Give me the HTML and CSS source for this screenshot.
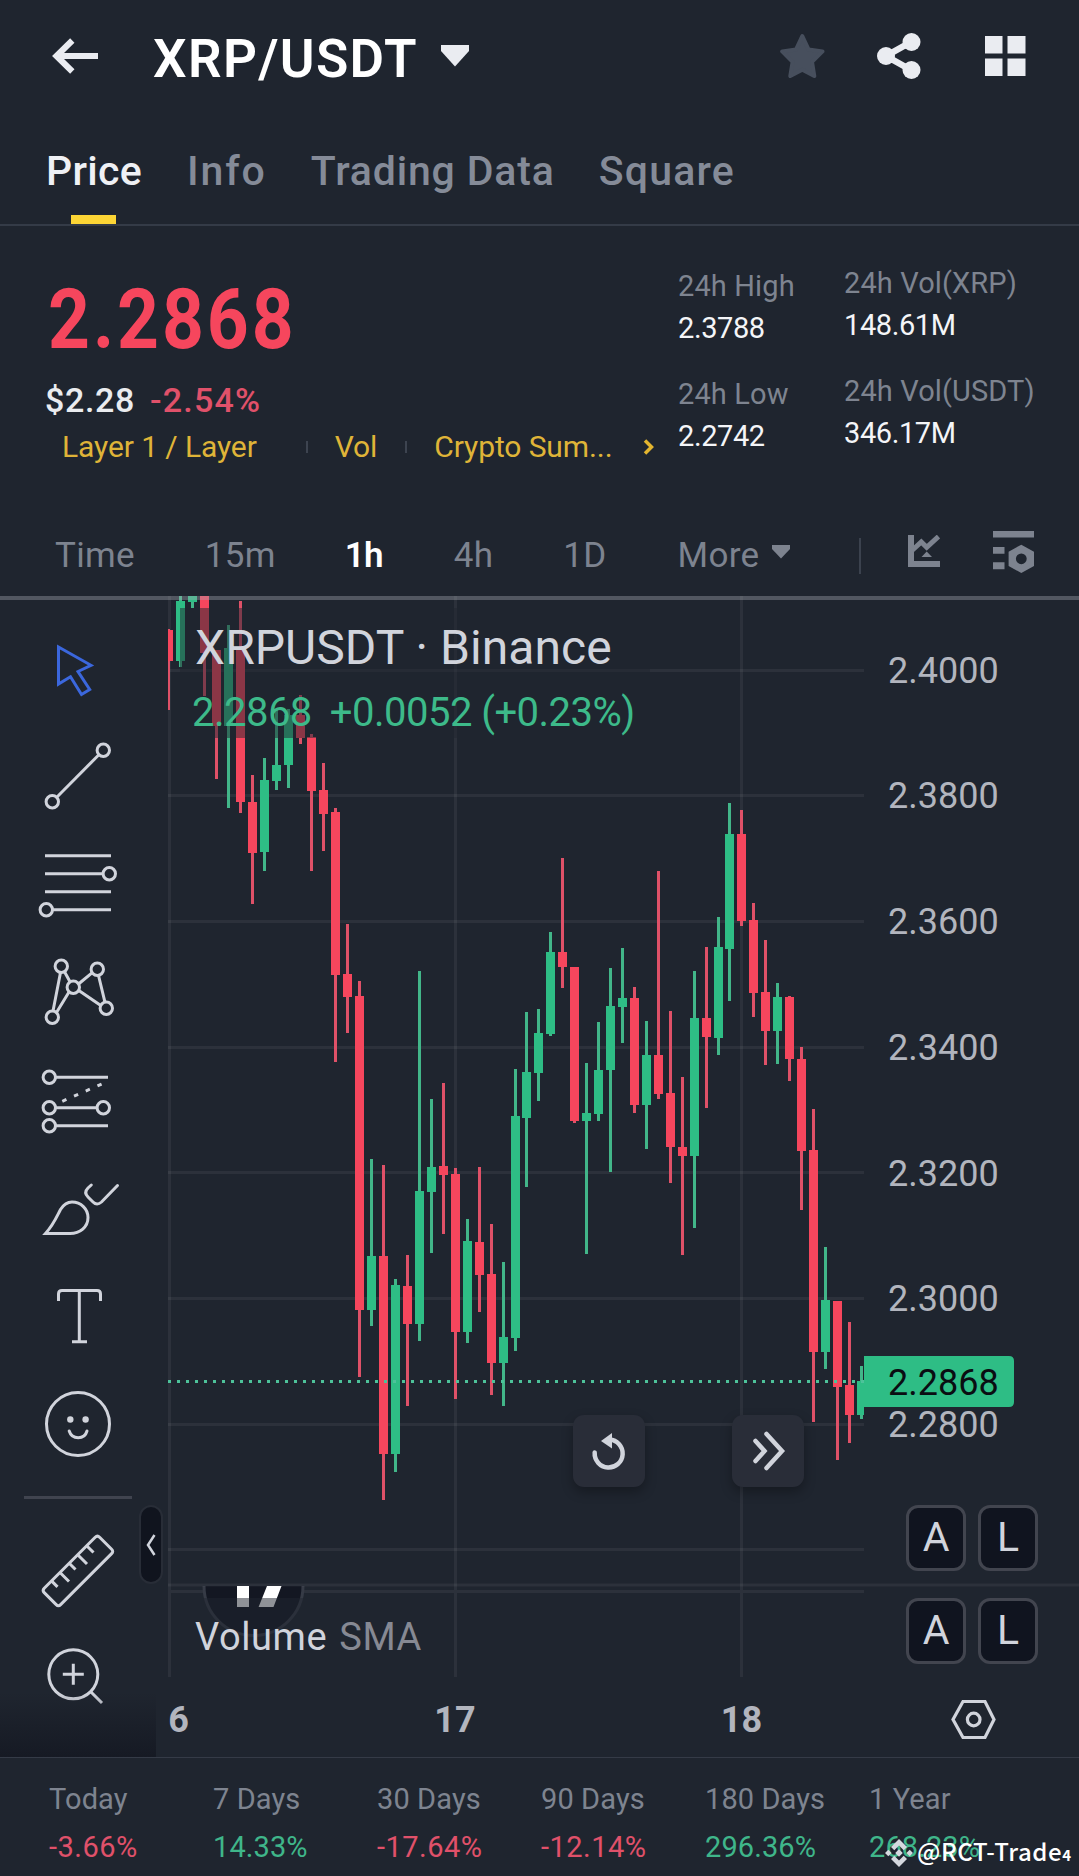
FILE: index.html
```
<!DOCTYPE html>
<html lang="en">
<head>
    <meta charset="UTF-8">
    <meta name="viewport" content="width=device-width, initial-scale=1.0">
    <title>XRP/USDT</title>
    <link rel="stylesheet" href="styles.css">
</head>
<body>
    <header class="header">
        <svg class="back" width="46" height="36" viewBox="0 0 46 36"><path d="M20.3 2.5L4.5 18L20.3 33.5M5 18H46"/></svg>
        <h1>XRP/USDT</h1>
        <svg class="caret" width="28" height="22" viewBox="0 0 28 22"><path d="M0 0H28V6L14 21.5L0 6Z"/></svg>
        <svg class="star" width="45" height="46" viewBox="0 0 45 46"><path d="M22.3 3L28.6 16.6L42.5 18.4L32 28.8L34.3 43L22.3 36.8L10.3 43L12.6 28.8L2.2 18.4L16 16.6Z"/></svg>
        <svg class="share" width="44" height="46" viewBox="0 0 44 46">
            <path d="M34 9L9 23L34 37"/>
            <circle cx="9" cy="23" r="9"/><circle cx="34.5" cy="9" r="9"/><circle cx="34.5" cy="37" r="9"/>
        </svg>
        <svg class="grid-icon" width="41" height="40" viewBox="0 0 41 40"><path d="M0 0H17.5V17.5H0ZM22.5 0H40.5V17.5H22.5ZM0 22.5H17.5V40H0ZM22.5 22.5H40.5V40H22.5Z"/></svg>
    </header>

    <nav class="tabs">
        <span class="tab active">Price</span>
        <span class="tab info">Info</span>
        <span class="tab trading">Trading Data</span>
        <span class="tab square">Square</span>
    </nav>

    <section class="quote">
        <div class="main-price">
            <div class="price">2.2868</div>
            <div class="change"><span class="usd">$2.28</span><span class="down">-2.54%</span></div>
            <div class="tags">
                <span>Layer 1 / Layer</span>
                <i class="sep sep-first"></i>
                <span>Vol</span>
                <i class="sep"></i>
                <span>Crypto Sum...</span>
                <svg width="11" height="16" viewBox="0 0 11 16"><path d="M2 1.5L8.5 8L2 14.5"/></svg>
            </div>
        </div>
        <div class="stats">
            <label>24h High</label>
            <b>2.3788</b>
            <label>24h Low</label>
            <b>2.2742</b>
        </div>
        <div class="stats volume">
            <label>24h Vol(XRP)</label>
            <b>148.61M</b>
            <label>24h Vol(USDT)</label>
            <b>346.17M</b>
        </div>
    </section>

    <div class="intervals">
        <span>Time</span>
        <span>15m</span>
        <span class="active">1h</span>
        <span>4h</span>
        <span>1D</span>
        <span class="more">More <svg width="18" height="14" viewBox="0 0 18 14"><path d="M0 0H18V4L9 13.5L0 4Z"/></svg></span>
        <i class="bar"></i>
        <svg class="kline" width="32" height="32" viewBox="0 0 32 32">
            <path class="fill" d="M0 0H6V26H32V32H0ZM18.7 16.5L24 22H13.5Z"/>
            <path class="stroke" d="M4 15.5L13.3 7L18.7 12.3L30.5 1.5"/>
        </svg>
        <svg class="settings" width="41" height="42" viewBox="0 0 41 42">
            <path class="fill" d="M0 0H41V6.5H0ZM0 16H11.5V22.7H0ZM0 31.3H11.5V38.3H0Z"/>
            <path class="fill" fill-rule="evenodd" d="M28.3 13.7L41 20.7V35L28.3 42L15.6 35V20.7ZM28.3 22.4A5.4 5.4 0 1 0 28.3 33.2A5.4 5.4 0 1 0 28.3 22.4Z"/>
        </svg>
    </div>

    <main class="chart">
        <aside class="toolbar">
            <svg class="cursor" viewBox="0 0 168 108"><path d="M58.5 33L91 51.3L78 57.5L89.7 75.5L81.5 80.5L70.5 62.7L58.5 70Z"/></svg>
            <svg viewBox="0 0 168 108"><path d="M57 75L98.6 33"/><circle cx="52.3" cy="79.7" r="6.2"/><circle cx="103.3" cy="28.3" r="6.2"/></svg>
            <svg viewBox="0 0 168 108"><path d="M45 25.7H111M45 43.7H103M45 61.7H111M52.5 79.7H111"/><circle cx="109.3" cy="43.7" r="6.2"/><circle cx="46.3" cy="79.7" r="6.2"/></svg>
            <svg viewBox="0 0 168 108">
                <path d="M60.5 34.5L53 73M64.5 33.7L70 43.8M78.5 46L92 34.8M98.5 37.5L105 64.3M78.8 52.4L100.8 67.4M69 54L56.5 74.5"/>
                <circle cx="61.3" cy="28.3" r="6.2"/><circle cx="97.3" cy="31.3" r="6.2"/><circle cx="73.3" cy="49.3" r="6.2"/><circle cx="106.3" cy="70.3" r="6.2"/><circle cx="52.3" cy="79.3" r="6.2"/>
            </svg>
            <svg viewBox="0 0 168 108">
                <path d="M56 31.3H108M56 61.7H97M56 79.7H108"/><path stroke-dasharray="4.5 8.3" d="M62.3 55.3L104 37"/>
                <circle cx="49.3" cy="31.3" r="6.2"/><circle cx="49.3" cy="61.7" r="6.2"/><circle cx="103.3" cy="61.7" r="6.2"/><circle cx="49.3" cy="79.7" r="6.2"/>
            </svg>
            <svg viewBox="0 0 168 108"><path d="M45.5 79.5C54 70 56.5 63 60.5 55.5C64 50 67 48 72 48C81 48 88 55 88 63.5C88 73 80 79.5 70 79.5Z"/><path stroke-linecap="round" d="M91.3 31L88 34Q83.5 38.5 88 43L93 48Q97 52 101.5 48L117.5 31.5"/></svg>
            <svg viewBox="0 0 168 108"><path d="M58.5 39V32Q58.5 28.5 62 28.5H97Q100.5 28.5 100.5 32V39M79.3 28.5V79.7M72 79.7H87"/></svg>
            <svg viewBox="0 0 168 108"><circle cx="78" cy="54" r="31.5"/><circle class="dot" cx="70.3" cy="49.5" r="3.2"/><circle class="dot" cx="85.6" cy="49.5" r="3.2"/><path stroke-linecap="round" d="M69.2 61C72 70 84.5 70 87 61"/></svg>
            <hr>
            <svg viewBox="0 0 168 108">
                <path stroke-linejoin="round" d="M95.2 20.2Q97.4 18 99.6 20.2L111.6 32.2Q113.8 34.4 111.6 36.6L60.6 87.6Q58.4 89.8 56.2 87.6L44.2 75.6Q42 73.4 44.2 71.2Z"/>
                <path d="M51.5 63.9L57.5 69.9M60 55.5L69 64.5M69.2 46.2L75.5 52.5M77.7 37.7L87 47M86.7 28.7L93.5 35.5"/>
            </svg>
            <svg viewBox="0 0 168 108"><circle cx="73.3" cy="49.3" r="24.5"/><path d="M90.5 66.5L102 78M73.3 38.8V59.8M62.8 49.3H83.8"/></svg>
            <div class="fade"></div>
            <button class="collapse"><svg width="10" height="22" viewBox="0 0 10 22"><path d="M8.5 1L2 11L8.5 21"/></svg></button>
        </aside>
        <div class="plot">
            <svg id="canvas" width="911" height="1161" viewBox="168 596 911 1161"></svg>
            <div class="legend">
                <div class="symbol">XRPUSDT · Binance</div>
                <div class="values"><span>2.2868</span><span>+0.0052 (+0.23%)</span></div>
            </div>
            <div class="legend legend-volume"><span>Volume</span><span class="sma">SMA</span></div>
            <button class="float reset"><svg width="72" height="72" viewBox="0 0 72 72"><path class="line" d="M21.7 37.5A14 14 0 1 0 36.5 24.5"/><path class="tip" d="M28 26L39 18V33.5Z"/></svg></button>
            <button class="float next"><svg width="72" height="72" viewBox="0 0 72 72"><path class="line" d="M23.5 26L32.5 36L23.5 46M34.5 19L50 36L34.5 53"/></svg></button>
            <div class="modes"><button>A</button><button>L</button></div>
            <div class="modes modes-volume"><button>A</button><button>L</button></div>
        </div>
    </main>

    <footer class="periods">
        <div><label>Today</label><span class="down">-3.66%</span></div>
        <div><label>7 Days</label><span class="up">14.33%</span></div>
        <div><label>30 Days</label><span class="down">-17.64%</span></div>
        <div><label>90 Days</label><span class="down">-12.14%</span></div>
        <div><label>180 Days</label><span class="up">296.36%</span></div>
        <div><label>1 Year</label><span class="up">268.23%</span></div>
        <div class="author">
            <svg width="28" height="28" viewBox="0 0 28 28"><path d="M14 0L22 8L18.7 11.2L14 6.6L9.3 11.2L6 8ZM3.3 10.7L6.6 14L3.3 17.3L0 14ZM24.7 10.7L28 14L24.7 17.3L21.4 14ZM14 10.2L17.8 14L14 17.8L10.2 14ZM14 28L22 20L18.7 16.8L14 21.4L9.3 16.8L6 20Z"/></svg>
            <span>@RCT-Trade<small>4</small></span>
        </div>
    </footer>

    <script src="script.js"></script>
</body>
</html>
```

FILE: styles.css
```
*{
    margin: 0;
    padding: 0;
    box-sizing: border-box;
}
body{
    width: 1079px;
    height: 1876px;
    overflow: hidden;
    background-color: #1f252f;
    color: #eaecef;
    font-family: Roboto, sans-serif;
}
svg{
    display: block;
    flex: none;
}
button{
    border: 0;
    font-family: inherit;
}
.down{
    color: #e0516a;
}
.up{
    color: #3fb68a;
}

/* header */
.header{
    display: flex;
    align-items: center;
    height: 112px;
    padding: 0 53px 0 52px;
    fill: #eaecf1;
}
.back path{
    fill: none;
    stroke: #eaecf1;
    stroke-width: 6.2;
}
.header h1{
    margin: 5px 0 0 55px;
    font-size: 53px;
    line-height: 60px;
    font-weight: 600;
    letter-spacing: 1.34px;
    color: #fff;
}
.caret{
    margin-left: 23px;
}
.star{
    margin-left: auto;
    fill: #474f5d;
    stroke: #474f5d;
    stroke-width: 4;
    stroke-linejoin: round;
}
.share{
    margin-left: 52px;
}
.share path{
    fill: none;
    stroke: #eaecf1;
    stroke-width: 6.5;
}
.grid-icon{
    margin-left: 64px;
}

/* tabs */
.tabs{
    display: flex;
    gap: 44px;
    height: 114px;
    padding: 39px 0 0 46px;
    border-bottom: 2px solid #343b47;
    font-size: 41px;
    line-height: 40px;
    font-weight: 500;
    color: #858b98;
}
.tab{
    position: relative;
}
.tab.active{
    color: #eff1f5;
    letter-spacing: 0.3px;
}
.tab.active::after{
    content: "";
    position: absolute;
    left: 25px;
    top: 64px;
    width: 45px;
    height: 9px;
    background-color: #fcd535;
}
.info{
    margin-left: 1px;
    letter-spacing: 1.9px;
}
.trading{
    letter-spacing: 0.84px;
}
.square{
    letter-spacing: 1.2px;
}

/* quote */
.quote{
    display: grid;
    grid-template-columns: 678px 166px 1fr;
    height: 288px;
}
.main-price{
    padding-top: 52px;
}
.price{
    padding-left: 48px;
    font-size: 84px;
    line-height: 84px;
    font-weight: 700;
    letter-spacing: 3.4px;
    color: #f6465d;
    transform: scaleX(0.87);
    transform-origin: 48px 50%;
}
.change{
    display: flex;
    gap: 15px;
    margin-top: 18px;
    padding-left: 45px;
    font-size: 34px;
    line-height: 40px;
    font-weight: 500;
    letter-spacing: 1.2px;
}
.usd{
    letter-spacing: 0.65px;
}
.tags{
    display: flex;
    align-items: center;
    margin-top: 9px;
    padding-left: 62px;
    font-size: 30px;
    line-height: 36px;
    color: #dfb438;
}
.tags span{
    letter-spacing: -0.1px;
}
.tags svg{
    margin-left: 31px;
    fill: none;
    stroke: #e3b52f;
    stroke-width: 3.5;
}
.sep{
    width: 2px;
    height: 12px;
    margin: 0 27px 0 28px;
    background-color: #3d4450;
}
.sep-first{
    margin-left: 49px;
}
.stats{
    padding-top: 42px;
    font-size: 29px;
    line-height: 36px;
}
.stats.volume{
    padding-top: 39px;
}
.stats label{
    display: block;
    color: #7e8490;
    letter-spacing: 0.12px;
    white-space: nowrap;
}
.stats b{
    display: block;
    margin: 6px 0 30px;
    font-weight: 400;
    letter-spacing: -0.4px;
    color: #f4f5f8;
}

/* intervals */
.intervals{
    display: flex;
    align-items: center;
    gap: 70px;
    height: 83px;
    margin-bottom: -1px;
    padding-left: 55px;
    font-size: 35px;
    line-height: 42px;
    letter-spacing: 0.3px;
    color: #7d838f;
    fill: #7d838f;
}
.intervals .active{
    margin: 0 1px 0 -1px;
    color: #fff;
    font-weight: 600;
    letter-spacing: -0.8px;
}
.more{
    display: flex;
    gap: 13px;
    margin-left: 1px;
}
.more svg{
    margin-top: 10px;
}
.bar{
    width: 2px;
    height: 36px;
    margin: 0 -23px 0 -1px;
    background-color: #3b424e;
}
.kline{
    margin-top: -9px;
}
.kline .stroke{
    fill: none;
    stroke: #7d838f;
    stroke-width: 5;
}
.settings{
    margin: -7px 0 0 -17px;
}

/* chart */
.chart{
    position: relative;
    display: grid;
    grid-template-columns: 168px 911px;
    height: 1161px;
}
.chart::before{
    content: "";
    position: absolute;
    z-index: 2;
    left: 0;
    right: 0;
    top: 0;
    height: 4px;
    background-color: rgba(165, 170, 180, 0.38);
}
.toolbar{
    position: relative;
    height: 1161px;
    padding-top: 18px;
    overflow: hidden;
}
.toolbar > svg{
    width: 168px;
    height: 108px;
    fill: none;
    stroke: #d1d4dc;
    stroke-width: 3;
}
.toolbar > .cursor{
    stroke: #3b67dd;
}
.toolbar .dot{
    fill: #d1d4dc;
    stroke: none;
}
.toolbar hr{
    width: 108px;
    height: 3px;
    margin: 18px 0 18px 24px;
    border: 0;
    background-color: #40444f;
}
.fade{
    position: absolute;
    left: 0;
    bottom: 0;
    width: 156px;
    height: 64px;
    background: linear-gradient(rgba(22, 26, 36, 0), #161a24);
}
.collapse{
    position: absolute;
    left: 139px;
    top: 909px;
    width: 24px;
    height: 79px;
    padding-left: 5px;
    border: 2px solid #282d37;
    border-radius: 12px;
    background-color: #10141e;
}
.collapse path{
    fill: none;
    stroke: #d1d4dc;
    stroke-width: 2.5;
}
.plot{
    position: relative;
}
.legend{
    position: absolute;
    left: 12px;
    top: 12px;
    width: 470px;
    height: 130px;
    padding: 12px 0 0 15px;
    background-color: rgba(31, 37, 47, 0.5);
    color: #d1d4dc;
}
.symbol{
    font-size: 48px;
    line-height: 56px;
    letter-spacing: 0.05px;
}
.values{
    display: flex;
    gap: 18px;
    margin: 13px 0 0 -3px;
    font-size: 40px;
    line-height: 48px;
    letter-spacing: -0.52px;
    color: #3dba8a;
}
.legend-volume{
    display: flex;
    gap: 12px;
    top: 1002px;
    width: 250px;
    height: 67px;
    padding: 16px 0 0 15px;
    font-size: 38px;
    line-height: 46px;
    letter-spacing: 0.6px;
}
.sma{
    color: #868993;
}
.float{
    position: absolute;
    top: 819px;
    width: 72px;
    height: 72px;
    border-radius: 11px;
    background-color: #292d38;
    box-shadow: 0 5px 12px rgba(0, 0, 0, 0.3);
}
.reset{
    left: 405px;
}
.next{
    left: 564px;
}
.float .line{
    fill: none;
    stroke: #d1d4dc;
    stroke-width: 4.5;
    stroke-linecap: round;
}
.float .tip{
    fill: #d1d4dc;
}
.modes{
    position: absolute;
    left: 738px;
    top: 909px;
    display: flex;
    gap: 12px;
}
.modes-volume{
    top: 1002px;
}
.modes button{
    width: 60px;
    height: 66px;
    padding-bottom: 3px;
    border: 3px solid #42454f;
    border-radius: 12px;
    background-color: #10141f;
    color: #d1d4dc;
    font-size: 41px;
    line-height: 56px;
}

/* chart drawing */
.grid-line{
    stroke: rgba(255, 255, 255, 0.06);
    stroke-width: 3;
}
.up-body{
    fill: #2ebd85;
}
.down-body{
    fill: #f6465d;
}
.up-wick{
    fill: #42b689;
}
.down-wick{
    fill: #df5168;
}
.last-line{
    stroke: #4dc29a;
    stroke-width: 3;
    stroke-dasharray: 3 6;
}
.axis{
    font-size: 36px;
    fill: #b2b5be;
}
.axis.last{
    fill: #0a0d12;
}
.axis.day{
    font-weight: 700;
    text-anchor: middle;
}
.logo-circle{
    fill: #131722;
    stroke: #363b46;
    stroke-width: 3;
}
.logo-mark{
    fill: #fff;
}
.gear{
    fill: none;
    stroke: #d1d4dc;
    stroke-width: 3.2;
}

/* periods */
.periods{
    position: relative;
    display: grid;
    grid-template-columns: repeat(6, 164px);
    height: 119px;
    padding: 23px 0 0 49px;
    border-top: 1px solid #353b47;
    font-size: 29px;
    line-height: 36px;
    letter-spacing: 0.1px;
}
.periods label{
    display: block;
    margin-bottom: 12px;
    color: #7e8490;
}
.periods .down{
    letter-spacing: 0.5px;
}
.author{
    position: absolute;
    left: 885px;
    top: 77px;
    display: flex;
    align-items: center;
    gap: 4px;
    font: 500 24px/32px "Noto Sans CJK SC", sans-serif;
    letter-spacing: 0.6px;
    color: #fff;
    fill: #d5d8de;
}
.author small{
    font-size: 15px;
    font-weight: 700;
}
```

FILE: script.js
```
const canvas = document.getElementById('canvas');

// side, high, body top, body bottom, low
const candles = [
    ['down', 629, 630, 661, 710], ['up', 590, 601, 661, 667], ['up', 580, 590, 602, 608], ['down', 580, 590, 653, 696],
    ['down', 650, 650, 726, 779], ['up', 625, 648, 726, 808], ['down', 601, 648, 802, 813], ['down', 775, 802, 853, 904],
    ['up', 758, 780, 852, 871], ['up', 710, 765, 781, 790], ['up', 709, 715, 765, 788], ['down', 695, 715, 738, 744],
    ['down', 734, 737, 791, 871], ['down', 763, 790, 814, 851], ['down', 808, 812, 975, 1062], ['down', 924, 974, 997, 1033],
    ['down', 981, 996, 1310, 1377], ['up', 1159, 1256, 1310, 1326], ['down', 1165, 1256, 1454, 1500], ['up', 1279, 1285, 1454, 1472],
    ['down', 1255, 1286, 1324, 1406], ['up', 971, 1191, 1324, 1341], ['up', 1099, 1167, 1192, 1253], ['down', 1083, 1166, 1175, 1234],
    ['down', 1168, 1174, 1332, 1399], ['up', 1219, 1241, 1332, 1343], ['down', 1167, 1242, 1275, 1312], ['down', 1224, 1274, 1363, 1395],
    ['up', 1262, 1337, 1363, 1406], ['up', 1069, 1116, 1338, 1351], ['up', 1012, 1072, 1118, 1187], ['up', 1009, 1033, 1073, 1101],
    ['up', 932, 952, 1034, 1036], ['down', 858, 952, 967, 988], ['down', 967, 967, 1121, 1123], ['up', 1063, 1113, 1121, 1254],
    ['up', 1022, 1070, 1114, 1121], ['up', 968, 1006, 1070, 1172], ['up', 948, 998, 1007, 1043], ['down', 987, 998, 1105, 1113],
    ['up', 1021, 1055, 1105, 1149], ['down', 871, 1055, 1094, 1099], ['down', 1011, 1093, 1147, 1183], ['down', 1077, 1147, 1156, 1255],
    ['up', 971, 1018, 1156, 1228], ['down', 947, 1018, 1037, 1108], ['up', 917, 947, 1038, 1055], ['up', 803, 834, 949, 1001],
    ['down', 810, 834, 921, 926], ['down', 903, 920, 993, 1017], ['down', 940, 992, 1031, 1065], ['up', 983, 997, 1031, 1064],
    ['down', 996, 997, 1059, 1081], ['down', 1047, 1059, 1151, 1210], ['down', 1109, 1150, 1352, 1422], ['up', 1247, 1300, 1352, 1369],
    ['down', 1301, 1301, 1387, 1460], ['down', 1322, 1385, 1415, 1443], ['up', 1366, 1381, 1415, 1419]
];

const prices = ['2.4000', '2.3800', '2.3600', '2.3400', '2.3200', '2.3000', '2.2800', ''];
const days = [['6', 178.5], ['17', 455], ['18', 741.5]];

let html = '<clipPath id="area"><rect x="168" y="596" width="696" height="1081"/></clipPath><g clip-path="url(#area)">';

// grid
for (let i = 0; i < prices.length; i++) {
    let y = Math.round(669.5 + i * 125.7) + 0.5;
    html += `<path class="grid-line" d="M168 ${y}H864"/>`;
}
html += '<path class="grid-line" d="M168 1591.5H864M169.5 596V1677M455.5 596V1677M741.5 596V1677"/>';

// candles
for (let i = 0; i < candles.length; i++) {
    let [side, high, top, bottom, low] = candles[i];
    let x = 168 + 12 * i - (i >= 12) - (i >= 30) - (i >= 47);
    html += `<rect class="${side}-wick" x="${x - 1}" y="${high}" width="3" height="${low - high}"/>`;
    html += `<rect class="${side}-body" x="${x - 4}" y="${top}" width="9" height="${bottom - top}"/>`;
}
html += '<path class="last-line" d="M168 1381.5H864"/></g>';

// logo cut by the pane border
html += '<path class="logo-circle" d="M204 1586A49.5 49.5 0 0 0 303 1586"/>';
html += '<path class="logo-mark" d="M237 1586H249V1607H237ZM267 1586H281.5L273.5 1607H258.6Z"/>';
html += '<path class="grid-line" d="M168 1585H1079"/>';

// price axis
for (let i = 0; i < prices.length; i++) {
    html += `<text class="axis" x="888" y="${682.7 + i * 125.7}">${prices[i]}</text>`;
}
html += '<path class="up-body" d="M864 1356H1009Q1014 1356 1014 1361V1402Q1014 1407 1009 1407H864Z"/>';
html += '<text class="axis last" x="888" y="1395">2.2868</text>';

// time axis
for (const [day, x] of days) {
    html += `<text class="axis day" x="${x}" y="1732">${day}</text>`;
}
html += '<path class="gear" d="M963 1701.5H985L994 1719.5L985 1737.5H963L953 1719.5Z"/><circle class="gear" cx="973.7" cy="1719.5" r="6.3"/>';

canvas.innerHTML = html;
```
